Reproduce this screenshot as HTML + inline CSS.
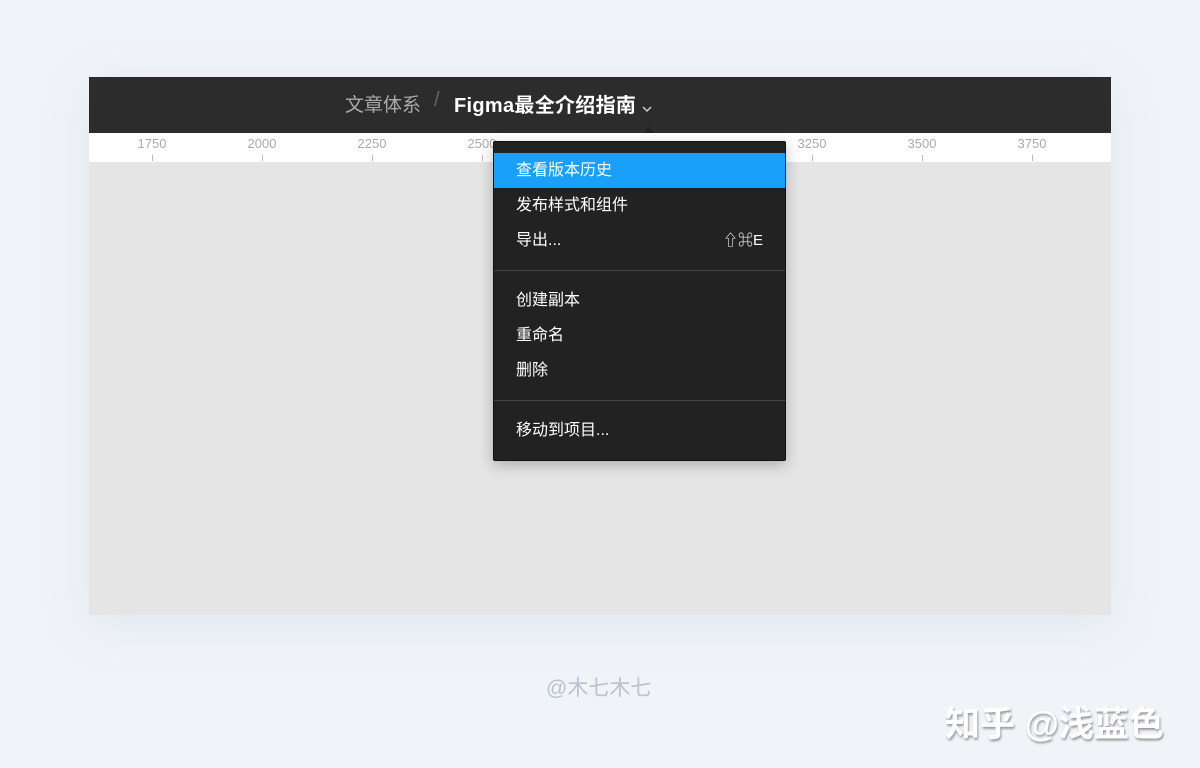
<!DOCTYPE html>
<html><head><meta charset="utf-8"><style>
body{margin:0;width:1200px;height:768px;background:#f0f4f9;position:relative;overflow:hidden;font-family:"Liberation Sans","Noto Sans CJK SC",sans-serif}
.panel{position:absolute;left:89px;top:77px;width:1022px;height:538px;background:#e5e5e5;box-shadow:0 10px 40px rgba(180,195,215,.25)}
.hdr{position:absolute;left:0;top:0;width:1022px;height:56px;background:#2c2c2c}
.ruler{position:absolute;left:0;top:56px;width:1022px;height:29px;background:#fff}
.lab{position:absolute;top:3px;font-size:13px;color:#aaa;transform:translateX(-50%)}
.tick{position:absolute;top:22px;width:1px;height:6px;background:#bbb}
.menu{position:absolute;left:493px;top:141px;width:291px;height:318px;background:#222;border:1px solid #111;border-radius:2px;box-shadow:0 4px 14px rgba(0,0,0,.25)}
.it{position:absolute;left:0;width:291px;height:35px;line-height:35px;color:#fff;font-size:16px;padding-left:22px;box-sizing:border-box}
.sep{position:absolute;left:0;width:291px;height:1px;background:#444}
</style></head><body>
<div class="panel">
 <div class="hdr">
  <div style="position:absolute;left:256px;top:13px;font-size:19px;color:#aaa">文章体系</div>
  <div style="position:absolute;left:345px;top:12px;font-size:20px;color:#666">/</div>
  <div style="position:absolute;left:365px;top:12px;font-size:20px;color:#fff;font-weight:bold;letter-spacing:0.3px">Figma最全介绍指南</div>
  <svg style="position:absolute;left:553px;top:28px" width="10" height="8"><path d="M1 2l4 4 4-4" stroke="#ccc" stroke-width="1.5" fill="none"/></svg>
  <svg style="position:absolute;left:553px;top:50px" width="14" height="8"><path d="M0 8L7 0L14 8Z" fill="#222"/></svg>
 </div>
 <div class="ruler">
  <div class="lab" style="left:63px">1750</div><div class="tick" style="left:63px"></div>
  <div class="lab" style="left:173px">2000</div><div class="tick" style="left:173px"></div>
  <div class="lab" style="left:283px">2250</div><div class="tick" style="left:283px"></div>
  <div class="lab" style="left:393px">2500</div><div class="tick" style="left:393px"></div>
  <div class="lab" style="left:723px">3250</div><div class="tick" style="left:723px"></div>
  <div class="lab" style="left:833px">3500</div><div class="tick" style="left:833px"></div>
  <div class="lab" style="left:943px">3750</div><div class="tick" style="left:943px"></div>
 </div>
</div>
<div class="menu">
 <div class="it" style="top:11px;background:#18a0fb">查看版本历史</div>
 <div class="it" style="top:46px">发布样式和组件</div>
 <div class="it" style="top:81px">导出...<span style="position:absolute;right:22px;font-size:15px">⇧⌘E</span></div>
 <div class="sep" style="top:128px"></div>
 <div class="it" style="top:141px">创建副本</div>
 <div class="it" style="top:176px">重命名</div>
 <div class="it" style="top:211px">删除</div>
 <div class="sep" style="top:258px"></div>
 <div class="it" style="top:271px">移动到项目...</div>
</div>
<div style="position:absolute;left:546px;top:672px;font-size:21px;color:#b9c2ce">@木七木七</div>
<div style="position:absolute;left:945px;top:696px;font-size:35px;color:#fff;text-shadow:1px 2px 2px #999;font-weight:bold">知乎 @浅蓝色</div>
</body></html>
